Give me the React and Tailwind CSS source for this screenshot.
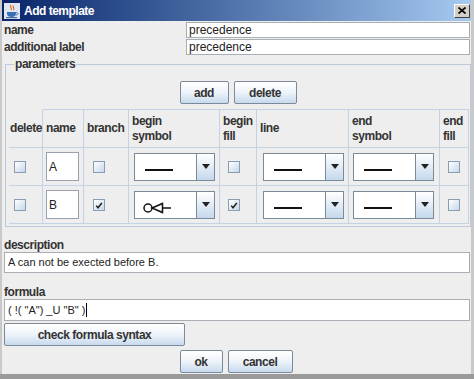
import React from 'react'

const FONT = "font-['Liberation_Sans',Arial,sans-serif]"
const BOLD = 'text-[12px] font-bold tracking-[-0.45px]'

function Check({ checked }) {
  return (
    <div className="w-[12px] h-[12px] border border-[#8a9cb0] bg-linear-to-br from-white to-[#c6d8eb] flex items-center justify-center">
      {checked && (
        <svg width="8" height="8" viewBox="0 0 8 8">
          <path d="M1.2 4.6 L3 6.8 L6.8 2" stroke="#1e1e1e" strokeWidth="1.5" fill="none" />
        </svg>
      )}
    </div>
  )
}

function Symbol({ kind }) {
  return (
    <svg width="61" height="26" viewBox="0 0 61 26">
      {kind === 'line' && <line x1="10" y1="16" x2="38" y2="16" stroke="#111" strokeWidth="2" />}
      {kind === 'circleArrow' && (
        <g stroke="#111" strokeWidth="1.5" fill="none">
          <circle cx="13" cy="16" r="4" />
          <path d="M17 16 L27.5 11.5 L27.5 20.5 Z" />
          <line x1="27.5" y1="16" x2="36" y2="16" />
        </g>
      )}
    </svg>
  )
}

function Combo({ kind }) {
  return (
    <div className="w-[81px] h-[28px] border border-[#7a8a99] bg-white flex">
      <div className="flex-1 flex items-start">
        <Symbol kind={kind} />
      </div>
      <div className="w-[18px] border-l border-[#7a8a99] bg-linear-to-b from-white to-[#c4d8ec] flex items-center justify-center">
        <svg width="8" height="5" viewBox="0 0 8 5">
          <path d="M0 0 H8 L4 5 Z" fill="#222" />
        </svg>
      </div>
    </div>
  )
}

function Button({ children, className }) {
  return (
    <div className={`h-[23px] border border-[#7a8a99] rounded-[2px] bg-linear-to-b from-white via-[#eef3f9] to-[#c8daee] flex items-center justify-center text-[#333] ${BOLD} ${className}`}>
      {children}
    </div>
  )
}

const CELL = 'border-r border-b border-[#c3d3e4] flex items-center'
const HEAD = 'border-t ' + CELL + ' pl-[3px] text-[#333] leading-[15px] ' + BOLD

const ROWS = [
  { name: 'A', branch: false, begin: 'line', beginFill: false },
  { name: 'B', branch: true, begin: 'circleArrow', beginFill: true },
]

export default function App() {
  return (
    <div className={`w-[474px] h-[379px] flex flex-col bg-[#c9c9c9] pl-[2px] pr-[3px] border-b-[5px] border-[#9a9a9a] ${FONT}`}>
      {/* Title bar */}
      <div className="h-[21px] flex items-center bg-linear-to-r from-[#0a246a] to-[#a6caf0] pl-[2px] pr-[1px]">
        <svg width="16" height="16" viewBox="0 0 16 16" className="shrink-0">
          <rect x="0" y="0" width="16" height="16" fill="#dfe6f2" />
          <path d="M7 2 C5 4 9 5 7 7 M9.5 2.5 C8 4 11 5 9.5 7" stroke="#e0701a" strokeWidth="1.2" fill="none" />
          <path d="M3 9 H12 V11 C12 13 10 14 7.5 14 C5 14 3 13 3 11 Z" fill="#3a6fb8" />
          <path d="M12 9.5 C14.5 9.5 14.5 12 12 12" stroke="#3a6fb8" strokeWidth="1" fill="none" />
          <rect x="2" y="14.2" width="11" height="1" fill="#2a4f8a" />
        </svg>
        <span className="ml-[4px] text-white font-bold text-[12px] tracking-[-0.5px] leading-none flex-1">Add template</span>
        <div className="w-[16px] h-[14px] bg-[#d4d0c8] border-t border-l border-white border-r border-b border-r-[#404040] border-b-[#404040] flex items-center justify-center">
          <svg width="8" height="7" viewBox="0 0 8 7">
            <path d="M0.5 0.5 L7.5 6.5 M7.5 0.5 L0.5 6.5" stroke="#000" strokeWidth="1.7" />
          </svg>
        </div>
      </div>

      {/* Content */}
      <div className="flex-1 bg-[#eeeeee] pl-[2px] pr-[1px] flex flex-col text-[#333]">
        <div className="mt-[1px] h-[16px] flex items-center">
          <span className={`w-[182px] ${BOLD}`}>name</span>
          <div className="w-[284px] h-[16px] bg-white border border-[#a9aeb5] text-[12px] leading-[14px] pl-[2px] text-[#222]">precedence</div>
        </div>
        <div className="mt-[1px] h-[16px] flex items-center">
          <span className={`w-[182px] ${BOLD}`}>additional label</span>
          <div className="w-[284px] h-[16px] bg-white border border-[#a9aeb5] text-[12px] leading-[14px] pl-[2px] text-[#222]">precedence</div>
        </div>

        {/* Parameters */}
        <fieldset className="mt-[2px] ml-[1px] w-[466px] border border-[#bccbdb] pb-[2px]">
          <legend className={`ml-[8px] px-[1px] leading-[14px] ${BOLD}`}>parameters</legend>
          <div className="mt-[10px] flex justify-center gap-[5px]">
            <Button className="w-[49px]">add</Button>
            <Button className="w-[63px]">delete</Button>
          </div>
          <div className="mt-[5px] ml-[3px] grid grid-cols-[34px_41px_45px_91px_37px_92px_91px_29px] grid-rows-[39px_38px_38px]">
            <div className={HEAD + ' border-t-transparent !pl-[1px]'}>delete</div>
            <div className={HEAD}>name</div>
            <div className={HEAD}>branch</div>
            <div className={HEAD}>begin<br />symbol</div>
            <div className={HEAD}>begin<br />fill</div>
            <div className={HEAD}>line</div>
            <div className={HEAD}>end<br />symbol</div>
            <div className={HEAD}>end<br />fill</div>
            {ROWS.map(r => (
              <React.Fragment key={r.name}>
                <div className={CELL + ' pl-[5px]'}><Check /></div>
                <div className={CELL + ' pl-[3px]'}>
                  <div className="w-[33px] h-[29px] bg-white border border-[#9aa1aa] text-[12px] text-[#222] pl-[2px] flex items-center">{r.name}</div>
                </div>
                <div className={CELL + ' pl-[9px]'}><Check checked={r.branch} /></div>
                <div className={CELL + ' pl-[5px]'}><Combo kind={r.begin} /></div>
                <div className={CELL + ' pl-[8px]'}><Check checked={r.beginFill} /></div>
                <div className={CELL + ' pl-[6px]'}><Combo kind="line" /></div>
                <div className={CELL + ' pl-[4px]'}><Combo kind="line" /></div>
                <div className={CELL + ' pl-[8px]'}><Check /></div>
              </React.Fragment>
            ))}
          </div>
        </fieldset>

        <div className={`mt-[11px] h-[14px] leading-[14px] ${BOLD}`}>description</div>
        <div className="w-[466px] h-[21px] bg-white border border-[#a9aeb5] text-[11px] text-[#222] pl-[3px] flex items-center">A can not be exected before B.</div>

        <div className={`mt-[12px] h-[14px] leading-[14px] ${BOLD}`}>formula</div>
        <div className="w-[466px] h-[22px] bg-white border border-[#a9aeb5] text-[11px] text-[#222] pl-[3px] flex items-center">
          ( !( "A") _U "B" )<span className="ml-[1px] w-px h-[14px] bg-black" />
        </div>

        <Button className="mt-[2px] w-[181px]">check formula syntax</Button>

        <div className="mt-[4px] flex justify-center gap-[5px] pr-[2px]">
          <Button className="w-[43px]">ok</Button>
          <Button className="w-[65px]">cancel</Button>
        </div>
      </div>
    </div>
  )
}
